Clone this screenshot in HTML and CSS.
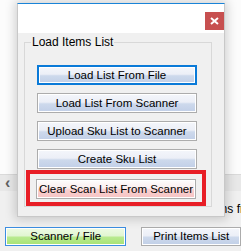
FILE: index.html
```html
<!DOCTYPE html>
<html>
<head>
<meta charset="utf-8">
<link rel="stylesheet" href="styles.css">
</head>
<body>
<div class="main">
  <div class="list">
    <div class="list-content"></div>
    <div class="hscroll"><span class="arrow">&#x2039;</span></div>
  </div>
  <div class="status"><span class="status-text">Items from scanner</span></div>
  <div class="bottom-bar">
    <button class="btn green focus">Scanner / File</button>
    <button class="btn blue print">Print Items List</button>
  </div>
</div>

<div class="dialog">
  <div class="titlebar">
    <div class="close">
      <svg width="9" height="8" viewBox="0 0 9 8"><path d="M1 1 L8 7 M8 1 L1 7" stroke="#fff" stroke-width="2"/></svg>
    </div>
  </div>
  <div class="client">
    <fieldset class="group">
      <legend>Load Items List</legend>
      <div class="buttons">
        <button class="btn blue dlg focus">Load List From File</button>
        <button class="btn blue dlg">Load List From Scanner</button>
        <button class="btn blue dlg">Upload Sku List to Scanner</button>
        <button class="btn blue dlg">Create Sku List</button>
        <div class="highlight">
          <button class="btn pink dlg">Clear Scan List From Scanner</button>
        </div>
      </div>
    </fieldset>
  </div>
</div>
</body>
</html>
```
FILE: styles.css
```css
* { box-sizing: border-box; }
html, body { margin: 0; padding: 0; }
body {
  width: 241px;
  height: 251px;
  overflow: hidden;
  background: #f0f0f0;
  font-family: "Liberation Sans", Arial, sans-serif;
  font-size: 11px;
  color: #000;
  position: relative;
}
.main { display: flex; flex-direction: column; height: 251px; }
.list { display: flex; flex-direction: column; }
.list-content { height: 174px; background: #fcfcfc; }
.hscroll {
  height: 17px;
  background: #e8e8e8;
  border-top: 1px solid #dadada;
  display: flex;
  align-items: center;
}
.arrow { font-size: 16px; font-weight: bold; color: #606060; margin-left: 5px; line-height: 16px; }
.status { height: 36px; overflow: hidden; white-space: nowrap; }
.status-text { display: block; margin-left: 204px; margin-top: 11px; font-size: 12px; }
.bottom-bar { display: flex; gap: 15px; padding-left: 5px; }

.btn {
  font-family: "Liberation Sans", Arial, sans-serif;
  font-size: 11.5px;
  white-space: nowrap;
  color: #000;
  height: 20px;
  padding: 0 0 1px 0;
  border: 1px solid #acacac;
  box-shadow: inset 0 0 0 1px #fff;
  cursor: default;
}
.blue { background: linear-gradient(#f4f6fb 0%, #eceff7 45%, #cdd9ec 55%, #c1cfe7 100%); }
.pink { background: linear-gradient(#fdfdfd 0%, #fbeeee 45%, #f8d0d0 55%, #f6c3c3 100%); }
.green { background: linear-gradient(#eefbe4 0%, #e2f6d2 45%, #b8ea8e 55%, #a6e274 100%); }
.focus { border: 2px solid #0a7ad8; box-shadow: inset 0 0 0 1px #fff; }
.bottom-bar .btn { height: 19px; margin-top: 0; }
.bottom-bar .green { width: 122px; border: 1px solid #3c8ee0; }
.bottom-bar .print { width: 100px; }

.dialog {
  position: absolute;
  left: 17px;
  top: 3px;
  width: 208px;
  height: 214px;
  background: #f0f0f0;
  border: 1px solid #c8c8c8;
  border-top: 1px solid #1a84d8;
  box-shadow: 0 0 10px 2px rgba(0,0,0,0.18);
  display: flex;
  flex-direction: column;
}
.titlebar {
  height: 29px;
  background: #fff;
  display: flex;
  justify-content: flex-end;
  align-items: flex-start;
  padding-top: 8px;
}
.close {
  width: 19px;
  height: 18px;
  background: #c75050;
  display: flex;
  align-items: center;
  justify-content: center;
}
.close svg { display: block; }
.client { flex: 1; padding: 3px 12px 0 6px; }
.group {
  margin: 0;
  padding: 0;
  border: 1px solid #d8d8d8;
  height: 171px;
}
.group legend {
  padding: 0 1px;
  margin-left: 6px;
  font-size: 12px;
  line-height: 13px;
}
.buttons {
  display: flex;
  flex-direction: column;
  gap: 8px;
  padding: 16px 0 0 12px;
}
.dlg { width: 160px; }
.highlight {
  width: 180px;
  margin-left: -11px;
  margin-top: -7px;
  border: 4px solid #e81e26;
  padding: 5px 6px 3px 6px;
}
```
